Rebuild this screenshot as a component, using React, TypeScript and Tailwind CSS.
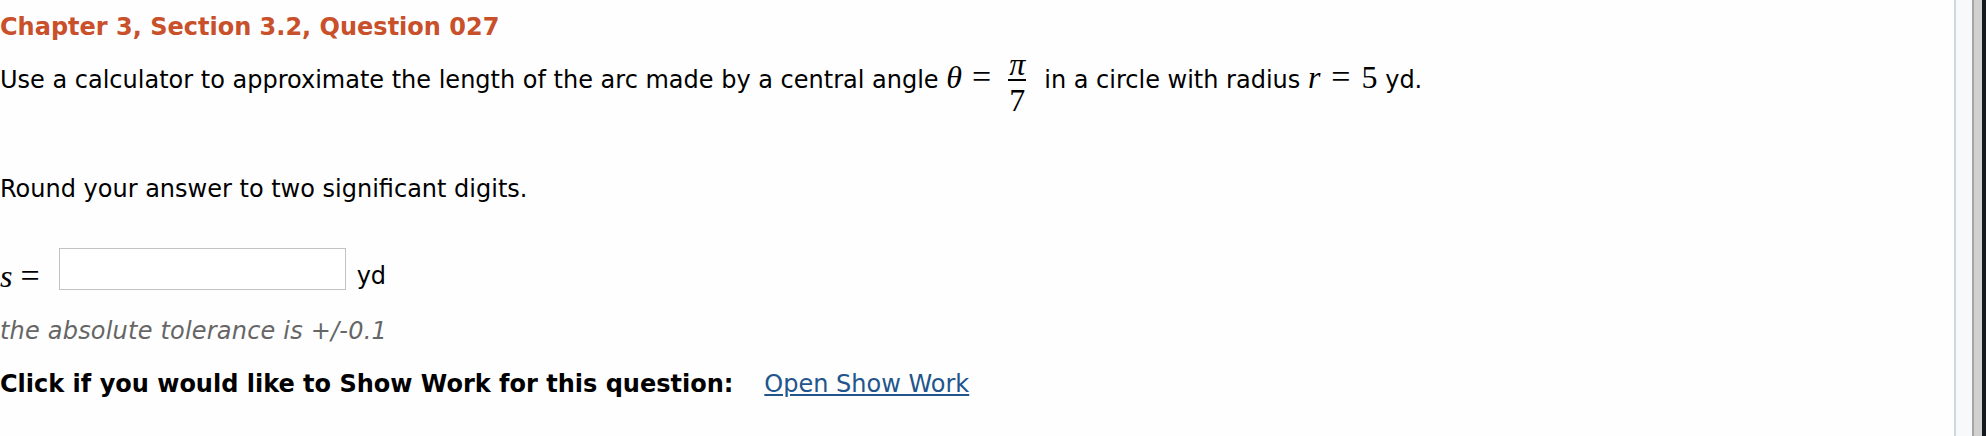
import React from "react";

const M = "font-['Liberation_Serif',serif] text-[32px]";
const EQ = "font-['Liberation_Serif',serif] text-[34px]";

function Fraction() {
  return (
    <span className="inline-flex flex-col items-center align-[13px]">
      <span className={`${M} italic leading-[26px] px-[1px]`}>π</span>
      <span className="block h-[2px] w-[18px] bg-black mt-[2px]" />
      <span className={`${M} leading-[26px] mt-[6px]`}>7</span>
    </span>
  );
}

export default function App() {
  return (
    <div className="flex w-[1986px] h-[436px] bg-[#fefefe] overflow-hidden">
      <div className="flex-1 min-w-0 flex flex-col font-['DejaVu_Sans',sans-serif] text-[24px] text-black">
        <div className="mt-[12px] h-[30px] leading-[30px] text-[24px] font-bold text-[#c8502a] whitespace-nowrap">
          Chapter 3, Section 3.2, Question 027
        </div>
        <div className="mt-[9px] h-[62px] leading-[28px] whitespace-nowrap">
          Use a calculator to approximate the length of the arc made by a central angle{" "}
          <span className={`${M} italic`}>θ</span>
          <span className={`${EQ} ml-[10px] mr-[17px]`}>=</span>
          <Fraction />
          <span className="ml-[18px]">in a circle with radius</span>{" "}
          <span className={`${M} italic`}>r</span>
          <span className={`${EQ} ml-[11px] mr-[11px]`}>=</span>
          <span className={M}>5</span> yd.
        </div>
        <div className="mt-[62px] h-[28px] leading-[28px] whitespace-nowrap">
          Round your answer to two significant digits.
        </div>
        <div className="mt-[45px] h-[42px] flex items-end whitespace-nowrap">
          <span className={`${M} italic leading-[28px]`}>s</span>
          <span className={`${EQ} leading-[28px] ml-[8px]`}>=</span>
          <input
            type="text"
            readOnly
            className="ml-[19px] w-[287px] h-[42px] border border-[#c2c2c2] bg-white outline-none"
          />
          <span className="ml-[11px] leading-[28px]">yd</span>
        </div>
        <div className="mt-[27px] h-[28px] leading-[28px] italic tracking-[0.2px] text-[#666666] whitespace-nowrap">
          the absolute tolerance is +/-0.1
        </div>
        <div className="mt-[25px] h-[28px] leading-[28px] whitespace-nowrap">
          <span className="font-bold">Click if you would like to Show Work for this question:</span>
          <a href="#" className="ml-[31px] text-[#22558c] underline">
            Open Show Work
          </a>
        </div>
      </div>
      <div className="w-[2px] bg-[#cfd8e0]" />
      <div className="w-[16px] bg-[#f7f9fb]" />
      <div className="w-[2px] bg-[#a6a6a6]" />
      <div className="w-[8px] bg-[#d1d1d1]" />
      <div className="w-[4px] bg-[#15191d]" />
    </div>
  );
}
